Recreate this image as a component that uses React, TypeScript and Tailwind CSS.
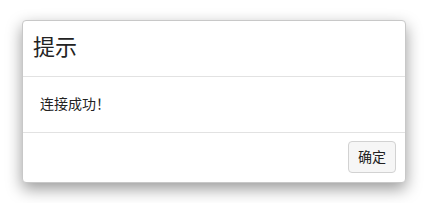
export default function App() {
  return (
    <div
      className="h-[203px] w-[427px] bg-white pl-[22px] pt-[20px]"
      style={{ fontFamily: '"Liberation Sans", "Noto Sans CJK SC", sans-serif' }}
    >
      <div className="flex w-[384px] flex-col rounded-[4px] border border-[#c8c8c8] bg-white shadow-[0_6px_16px_rgba(0,0,0,0.4)]">
        <div className="border-b border-[#e2e2e2] px-[10px] pb-[15px] pt-[14px]">
          <h4 className="text-[22px] leading-[26px] text-[#222]">提示</h4>
        </div>
        <div className="border-b border-[#e2e2e2] px-[17px] pb-[18px] pt-[18px]">
          <p className="text-[14px] leading-[19px] text-[#222]">连接成功！</p>
        </div>
        <div className="flex justify-end px-[9px] pb-[9px] pt-[8px]">
          <button
            type="button"
            className="h-[32px] w-[48px] rounded-[4px] border border-[#d2d2d2] bg-[#f6f6f6] text-[14px] text-[#222]"
          >
            确定
          </button>
        </div>
      </div>
    </div>
  );
}
